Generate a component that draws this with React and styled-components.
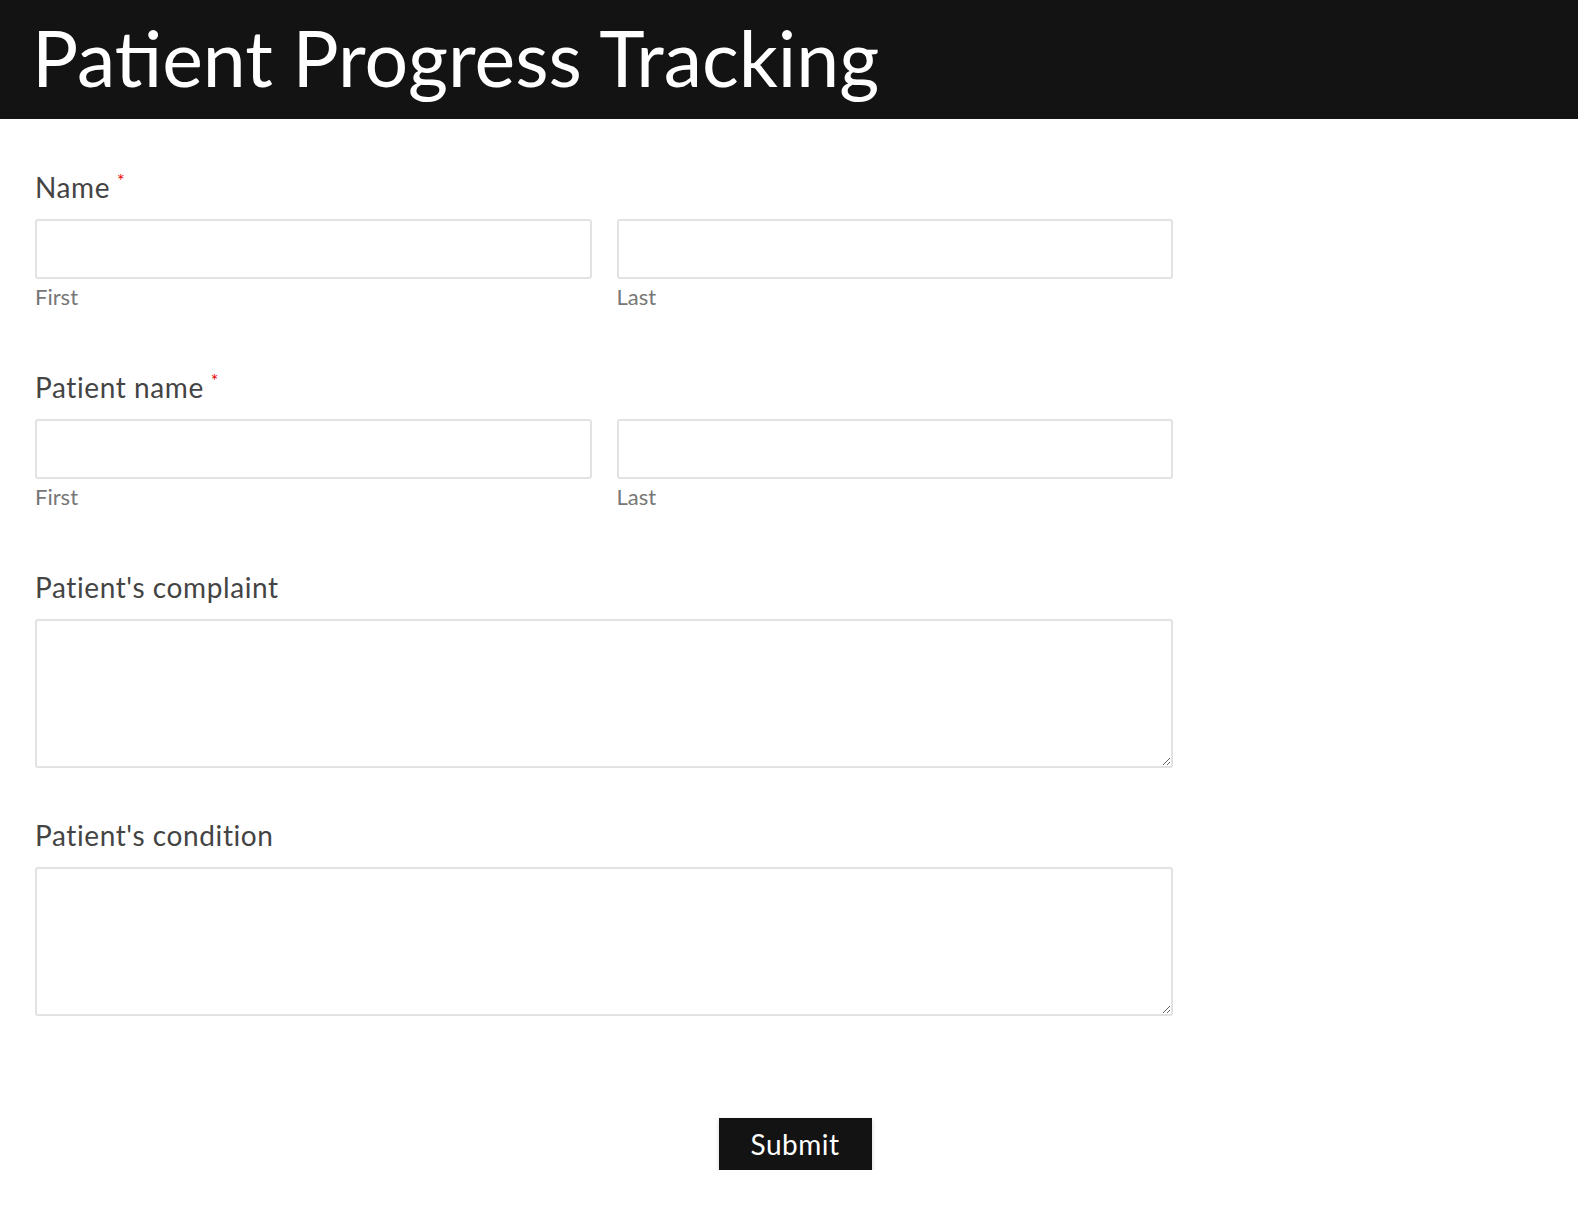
import React from 'react';
import styled, { createGlobalStyle } from 'styled-components';

const GlobalStyle = createGlobalStyle`
    body {
        margin: 0;
        background: #fff;
        font-family: Lato, "Open Sans", sans-serif;
    }
`;

const Header = styled.header`
    background: #131313;
    height: 119px;
    padding: 0 32px;
    display: flex;
    align-items: center;
    h1 {
        margin: 0;
        color: #fff;
        font-weight: 400;
        font-size: 77px;
        line-height: 1;
        padding-bottom: 4px;
    }
`;

const Form = styled.form`
    padding: 50px 35px 0;
    width: 1138px;
    display: flex;
    flex-direction: column;
`;

const Field = styled.div`
    display: flex;
    flex-direction: column;
    margin-bottom: ${p => p.$space || 0}px;
`;

const Label = styled.label`
    color: #444;
    font-size: 28px;
    letter-spacing: 0.6px;
    line-height: 36px;
    margin-bottom: 14px;
    span {
        color: #e00;
        font-size: 18px;
        vertical-align: top;
        margin-left: 7px;
        line-height: 22px;
    }
`;

const Row = styled.div`
    display: grid;
    grid-template-columns: 1fr 1fr;
    column-gap: 25px;
`;

const Input = styled.input`
    box-sizing: border-box;
    height: 60px;
    width: 100%;
    border: 2px solid #e2e2e2;
    border-radius: 3px;
    margin: 0;
`;

const Sub = styled.div`
    color: #777;
    font-size: 22px;
    line-height: 28px;
    margin-top: 4px;
`;

const TextArea = styled.textarea`
    box-sizing: border-box;
    height: 149px;
    width: 100%;
    border: 2px solid #e2e2e2;
    border-radius: 3px;
    margin: 0;
    display: block;
`;

const Actions = styled.div`
    display: flex;
    justify-content: center;
    padding: 102px 0 0 12px;
`;

const Button = styled.button`
    background: #131313;
    color: #fff;
    border: none;
    height: 52px;
    padding: 0 32px;
    font-family: inherit;
    font-size: 28px;
    letter-spacing: 0.5px;
    box-shadow: 0 2px 4px rgba(0, 0, 0, 0.18);
    cursor: pointer;
`;

function NameField({ label }) {
    return (
        <Field $space={58}>
            <Label>{label}<span>*</span></Label>
            <Row>
                <div>
                    <Input type="text" />
                    <Sub>First</Sub>
                </div>
                <div>
                    <Input type="text" />
                    <Sub>Last</Sub>
                </div>
            </Row>
        </Field>
    );
}

export default function App() {
    return (
        <>
            <GlobalStyle />
            <Header>
                <h1>Patient Progress Tracking</h1>
            </Header>
            <Form onSubmit={e => e.preventDefault()}>
                <NameField label="Name" />
                <NameField label="Patient name" />
                <Field $space={49}>
                    <Label>Patient's complaint</Label>
                    <TextArea />
                </Field>
                <Field>
                    <Label>Patient's condition</Label>
                    <TextArea />
                </Field>
            </Form>
            <Actions>
                <Button type="submit">Submit</Button>
            </Actions>
        </>
    );
}
